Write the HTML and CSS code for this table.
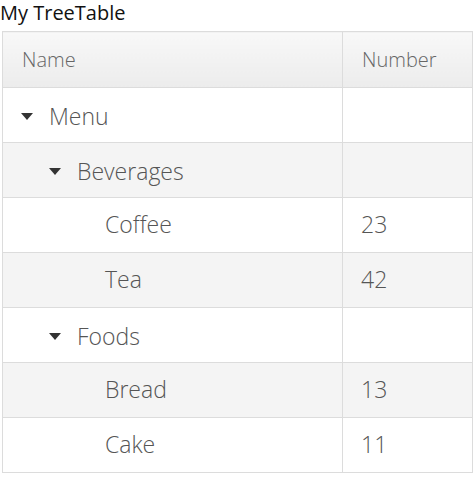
FILE: index.html
```html
<!DOCTYPE html>
<html>
<head>
<meta charset="utf-8">
<link rel="stylesheet" href="styles.css">
</head>
<body>
<div class="title">My TreeTable</div>
<table class="tt">
  <colgroup><col class="col-name"><col class="col-num"></colgroup>
  <thead>
    <tr><th>Name</th><th>Number</th></tr>
  </thead>
  <tbody>
    <tr class="odd"><td><span class="cell l0"><span class="tog"></span>Menu</span></td><td></td></tr>
    <tr class="even"><td><span class="cell l1"><span class="tog"></span>Beverages</span></td><td></td></tr>
    <tr class="odd"><td><span class="cell l2">Coffee</span></td><td>23</td></tr>
    <tr class="even"><td><span class="cell l2">Tea</span></td><td>42</td></tr>
    <tr class="odd"><td><span class="cell l1"><span class="tog"></span>Foods</span></td><td></td></tr>
    <tr class="even"><td><span class="cell l2">Bread</span></td><td>13</td></tr>
    <tr class="odd"><td><span class="cell l2">Cake</span></td><td>11</td></tr>
  </tbody>
</table>
</body>
</html>
```
FILE: styles.css
```css
html, body { margin: 0; padding: 0; background: #fff; }
body { padding: 0 2px; font-family: "Open Sans", sans-serif; }
.title {
  font-size: 20px;
  line-height: 26px;
  color: #111;
  height: 31px;
  margin-left: -2px;
}
.tt {
  border-collapse: collapse;
  width: 470px;
  table-layout: fixed;
  font-weight: 300;
}
.col-name { width: 340px; }
.col-num { width: 130px; }
.tt th {
  height: 55px;
  padding: 0 0 0 19px;
  text-align: left;
  font-weight: 300;
  font-size: 20px;
  color: #666;
  border: 1px solid #dcdcdc;
  background: linear-gradient(#f8f8f8, #ececec);
}
.tt td {
  height: 51px;
  padding: 0 0 3px 18px;
  font-size: 23px;
  color: #555;
  border: 1px solid #dcdcdc;
}
.tt tr.even td { background: #f4f4f4; }
.cell { display: inline-flex; align-items: center; }
.l0 { padding-left: 0; }
.l1 { padding-left: 28px; }
.l2 { padding-left: 84px; }
.tog {
  width: 0; height: 0;
  border-left: 6px solid transparent;
  border-right: 6px solid transparent;
  border-top: 7px solid #333;
  margin-right: 16px;
  margin-top: 2px;
}
```
